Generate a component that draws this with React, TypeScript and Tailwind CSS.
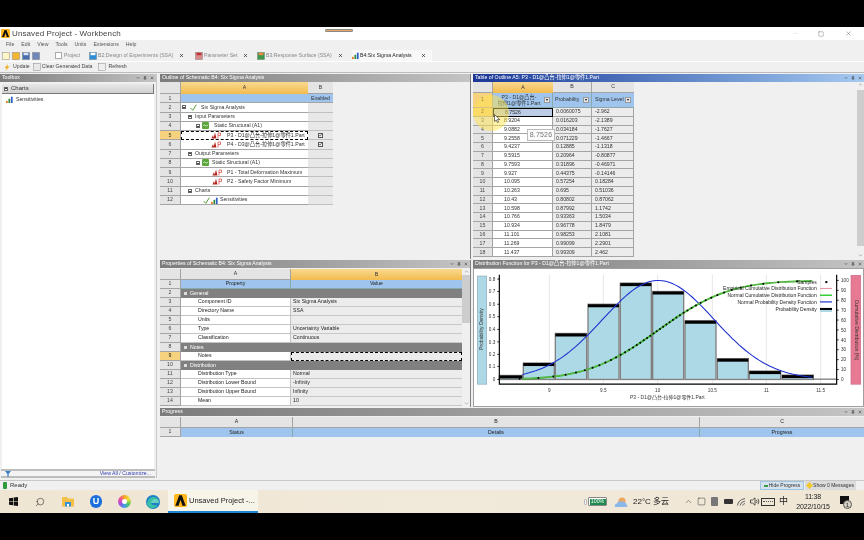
import React from "react";
import { Search, ChevronUp, ChevronDown, X, Minus, Pin, Square } from "lucide-react";

const P3 = "P3 - D1@凸台-拉伸1@零件1.Part";
const P4 = "P4 - D3@凸台-拉伸1@零件1.Part";

function Ansys({ size = 9 }: { size?: number }) {
  return (
    <svg width={size} height={size} viewBox="0 0 20 20" className="shrink-0">
      <rect width="20" height="20" rx="3" fill="#ffb71b" />
      <path d="M2 18 L8 2 H12 L18 18 H13 L10 9 L7 18 Z" fill="#111" />
    </svg>
  );
}

function Box() {
  return (
    <span className="inline-flex w-[4px] h-[4px] border-[0.5px] border-[#666] items-center justify-center shrink-0 bg-white">
      <span className="w-[2px] h-[0.5px] bg-[#444]" />
    </span>
  );
}

function Check() {
  return (
    <svg width="7" height="7" viewBox="0 0 10 10" className="shrink-0">
      <path d="M1 6 L4 9 L9 1" fill="none" stroke="#4a9a2a" strokeWidth="1.4" />
    </svg>
  );
}

function ParamIcon() {
  return (
    <svg width="10" height="7" viewBox="0 0 20 14" className="shrink-0">
      <path d="M1 13 L4 6 L6 13 Z M5 13 L8 1 L11 13 Z" fill="#b3261e" />
      <path d="M14 13 V2 H19 V7 H14" fill="none" stroke="#d9534f" strokeWidth="1.6" />
    </svg>
  );
}

function GreenIcon() {
  return (
    <svg width="7" height="7" viewBox="0 0 10 10" className="shrink-0">
      <rect width="10" height="10" rx="1.5" fill="#5aa83c" />
      <path d="M1.5 6 Q3.5 2.5 5 5 T8.5 4" fill="none" stroke="#fff" strokeWidth="1" />
    </svg>
  );
}

function ChartIcon() {
  return (
    <svg width="7" height="7" viewBox="0 0 10 10" className="shrink-0">
      <rect x="0" y="7" width="2.5" height="3" fill="#e07b20" />
      <rect x="3.5" y="4" width="2.5" height="6" fill="#2e8b3d" />
      <rect x="7" y="1" width="2.5" height="9" fill="#2f5fc4" />
    </svg>
  );
}

function PanelHeader({ title, active, wide }: { title: string; active?: boolean; wide?: boolean }) {
  return (
    <div
      className={
        active
          ? "h-[8px] shrink-0 flex items-center justify-between px-[2px] text-[5.2px] text-white bg-gradient-to-r from-[#1c3696] to-[#a6caf0]"
          : "h-[8px] shrink-0 flex items-center justify-between px-[2px] text-[5.2px] text-white bg-gradient-to-r from-[#7c7c7c] to-[#c4c4c4]"
      }
    >
      <span className="truncate">{title}</span>
      {wide !== false && (
        <span className="flex items-center gap-[3px] text-[#333] shrink-0">
          <ChevronDown size={4} strokeWidth={3} />
          <Pin size={4} strokeWidth={3} />
          <X size={4} strokeWidth={3} />
        </span>
      )}
    </div>
  );
}

const numCell = "flex items-center justify-center bg-[#e4e4e4] border-r border-b border-[#a4a4a4] text-[#444]";

function OutlineRow({ n, gold, left, dash, b, blue }: { n: number; gold?: boolean; left?: React.ReactNode; dash?: boolean; b?: React.ReactNode; blue?: boolean }) {
  return (
    <div className="grid grid-cols-[21px_127px_25px] h-[9.27px] text-[5.2px] text-[#333] leading-none">
      <div className={gold ? "flex items-center justify-center bg-[#f6d27e] border-r border-b border-[#a4a4a4]" : numCell}>{n}</div>
      <div
        className={
          blue
            ? "bg-[#9fc5ee] border-b border-[#a4a4a4]"
            : dash
            ? "bg-white border border-dashed border-black flex items-center gap-[2px]"
            : "bg-white border-b border-[#a4a4a4] flex items-center gap-[2px]"
        }
      >
        {left}
      </div>
      <div className={blue ? "bg-[#9fc5ee] border-b border-[#a4a4a4] flex items-center justify-center" : "bg-[#e8e8e8] border-b border-[#c0c0c0] flex items-center justify-center"}>{b}</div>
    </div>
  );
}

function CheckBoxMark() {
  return (
    <span className="w-[5px] h-[5px] border-[0.5px] border-[#555] bg-white flex items-center justify-center">
      <svg width="4" height="4" viewBox="0 0 10 10">
        <path d="M1 5 L4 9 L9 1" fill="none" stroke="#222" strokeWidth="2" />
      </svg>
    </span>
  );
}

function Outline() {
  return (
    <div className="flex flex-col h-full bg-[#f0f0f0] border-r border-[#808080] relative">
      <PanelHeader title="Outline of Schematic B4: Six Sigma Analysis" wide={false} />
      <div className="grid grid-cols-[21px_127px_25px] h-[12px] text-[5.2px] text-[#333] w-[173px]">
        <div className="bg-[#e4e4e4] border-r border-b border-[#a4a4a4]" />
        <div className="bg-gradient-to-b from-[#f9d98f] to-[#f2bb4c] flex items-center justify-center">A</div>
        <div className="bg-[#e4e4e4] border-b border-[#a4a4a4] flex items-center justify-center">B</div>
      </div>
      <div className="w-[173px]">
        <OutlineRow n={1} blue b="Enabled" />
        <OutlineRow n={2} left={<div className="flex items-center gap-[4px] pl-[1px]"><Box /><Check /><span>Six Sigma Analysis</span></div>} />
        <OutlineRow n={3} left={<div className="flex items-center gap-[3px] pl-[7px]"><Box /><span>Input Parameters</span></div>} />
        <OutlineRow n={4} left={<div className="flex items-center gap-[2px] pl-[15px]"><Box /><GreenIcon /><span className="ml-[3px]">Static Structural (A1)</span></div>} />
        <OutlineRow n={5} gold dash b={<CheckBoxMark />} left={<div className="flex items-center gap-[6px] pl-[29px]"><ParamIcon /><span className="whitespace-nowrap">{P3}</span></div>} />
        <OutlineRow n={6} b={<CheckBoxMark />} left={<div className="flex items-center gap-[6px] pl-[30px]"><ParamIcon /><span className="whitespace-nowrap">{P4}</span></div>} />
        <OutlineRow n={7} left={<div className="flex items-center gap-[3px] pl-[7px]"><Box /><span>Output Parameters</span></div>} />
        <OutlineRow n={8} left={<div className="flex items-center gap-[2px] pl-[15px]"><Box /><GreenIcon /><span className="ml-[1px]">Static Structural (A1)</span></div>} />
        <OutlineRow n={9} left={<div className="flex items-center gap-[5px] pl-[31px]"><ParamIcon /><span className="whitespace-nowrap">P1 - Total Deformation Maximum</span></div>} />
        <OutlineRow n={10} left={<div className="flex items-center gap-[5px] pl-[31px]"><ParamIcon /><span className="whitespace-nowrap">P2 - Safety Factor Minimum</span></div>} />
        <OutlineRow n={11} left={<div className="flex items-center gap-[3px] pl-[7px]"><Box /><span>Charts</span></div>} />
        <OutlineRow n={12} left={<div className="flex items-center gap-[1px] pl-[22px]"><Check /><ChartIcon /><span className="ml-[1px]">Sensitivities</span></div>} />
      </div>
    </div>
  );
}

const tableData: [string, string, string][] = [
  ["8.7526", "0.0060075", "-2.962"],
  ["8.9204", "0.016203", "-2.1389"],
  ["9.0882", "0.034184", "-1.7627"],
  ["9.2558", "0.071229", "-1.4667"],
  ["9.4237", "0.12885", "-1.1318"],
  ["9.5915", "0.20964", "-0.80877"],
  ["9.7593", "0.31896", "-0.46971"],
  ["9.927", "0.44375", "-0.14146"],
  ["10.095", "0.57254", "0.18284"],
  ["10.263", "0.695", "0.51036"],
  ["10.43", "0.80802", "0.87062"],
  ["10.598", "0.87992", "1.1742"],
  ["10.766", "0.93363", "1.5034"],
  ["10.934", "0.96778", "1.8479"],
  ["11.101", "0.98253", "2.1081"],
  ["11.269", "0.99099", "2.2901"],
  ["11.437", "0.99309", "2.462"],
];

function DropBtn() {
  return (
    <span className="w-[6px] h-[6px] bg-[#e8e8e8] border-[0.5px] border-[#999] flex items-center justify-center shrink-0">
      <span className="w-0 h-0 border-l-[1.5px] border-r-[1.5px] border-t-[2px] border-l-transparent border-r-transparent border-t-black" />
    </span>
  );
}

function TablePanel() {
  return (
    <div className="flex flex-col h-full bg-[#f0f0f0] relative overflow-hidden">
      <PanelHeader title={"Table of Outline A5: " + P3} active />
      <div className="flex-1 flex min-h-0">
        <div className="w-[161px] shrink-0 text-[5.2px] text-[#333] leading-none">
          <div className="grid grid-cols-[20px_60px_39px_42px] h-[11px]">
            <div className="bg-[#e4e4e4] border-r border-b border-[#a4a4a4]" />
            <div className="bg-gradient-to-b from-[#f9d98f] to-[#f2bb4c] flex items-center justify-center">A</div>
            <div className="bg-[#e4e4e4] border-r border-b border-[#a4a4a4] flex items-center justify-center">B</div>
            <div className="bg-[#e4e4e4] border-b border-[#a4a4a4] flex items-center justify-center">C</div>
          </div>
          <div className="grid grid-cols-[20px_60px_39px_42px] h-[15px]">
            <div className="bg-[#f6d27e] border-r border-b border-[#a4a4a4] flex items-center justify-center">1</div>
            <div className="bg-[#9fc5ee] border-r border-b border-[#8aa] flex items-center px-[2px] gap-[1px]">
              <span className="flex-1 text-center text-[5.2px] leading-[6px]">P3 - D1@凸台-<br />拉伸1@零件1.Part</span>
              <DropBtn />
            </div>
            <div className="bg-[#9fc5ee] border-r border-b border-[#8aa] flex items-center justify-between px-[2px]"><span>Probability</span><DropBtn /></div>
            <div className="bg-[#9fc5ee] border-b border-[#8aa] flex items-center justify-between px-[3px]"><span>Sigma Level</span><DropBtn /></div>
          </div>
          {tableData.map((r, i) => (
            <div key={i} className="grid grid-cols-[20px_60px_39px_42px] h-[8.77px]">
              <div className={i === 0 ? "bg-[#f6d27e] border-r border-b border-[#a4a4a4] flex items-center justify-center" : numCell}>{i + 2}</div>
              <div className={i === 0 ? "bg-[#bccbe6] border border-black flex items-center pl-[11px]" : "bg-white border-b border-r border-[#a4a4a4] flex items-center pl-[11px]"}>{r[0]}</div>
              <div className="bg-[#ececec] border-b border-r border-[#a4a4a4] flex items-center pl-[3px]">{r[1]}</div>
              <div className="bg-[#ececec] border-b border-r border-[#a4a4a4] flex items-center pl-[3px]">{r[2]}</div>
            </div>
          ))}
        </div>
        <div className="flex-1" />
        <div className="w-[7px] shrink-0 flex flex-col items-center text-[#555]">
          <ChevronUp size={5} strokeWidth={2} />
          <div className="w-full flex-1 bg-[#cdcdcd] mb-[7px] mt-[3px]" />
          <ChevronDown size={5} strokeWidth={2} className="mb-[1px]" />
        </div>
      </div>
      <div className="absolute left-[54px] top-[55px] h-[12px] w-[28px] bg-[#fafafa] border border-[#bbb] text-[7px] tracking-wide text-[#777] flex items-center justify-center">8.7526</div>
      <div className="absolute left-0 top-[21px] w-[36px] h-[36px] rounded-full bg-[#ffe44d]/50" />
      <svg className="absolute left-[21px] top-[40px]" width="7" height="9" viewBox="0 0 7 9">
        <path d="M0.5 0.5 V7.5 L2.2 6 L3.4 8.5 L4.6 8 L3.4 5.5 H5.8 Z" fill="#fff" stroke="#222" strokeWidth="0.6" />
      </svg>
    </div>
  );
}

function PropRow({ n, a, b, gold, dash }: { n: number; a: string; b?: string; gold?: boolean; dash?: boolean }) {
  return (
    <div className="grid grid-cols-[21px_110px_171px] h-[9px] text-[5.2px] text-[#222] leading-none">
      <div className={gold ? "flex items-center justify-center bg-[#f6d27e] border-r border-b border-[#a4a4a4]" : numCell}>{n}</div>
      <div className="bg-white border-r border-b border-[#c4c4c4] flex items-center pl-[17px]">{a}</div>
      <div className={dash ? "bg-[#ececec] border border-dashed border-black" : "bg-[#ececec] border-b border-[#c8c8c8] flex items-center pl-[2px]"}>{b}</div>
    </div>
  );
}

function PropSection({ n, t }: { n: number; t: string }) {
  return (
    <div className="grid grid-cols-[21px_281px] h-[9px] text-[5.2px] leading-none">
      <div className={numCell}>{n}</div>
      <div className="bg-[#808080] text-white flex items-center pl-[3px] gap-[3px]">
        <span className="w-[3px] h-[3px] bg-[#ddd]" />
        {t}
      </div>
    </div>
  );
}

function Properties() {
  return (
    <div className="flex flex-col h-full bg-[#f0f0f0] border-r border-[#808080] overflow-hidden">
      <PanelHeader title="Properties of Schematic B4: Six Sigma Analysis" />
      <div className="flex flex-1 min-h-0 pt-[1px]">
        <div className="w-[302px] shrink-0">
          <div className="grid grid-cols-[21px_110px_171px] h-[11px] text-[5.2px] text-[#333]">
            <div className="bg-[#e4e4e4] border-r border-b border-[#a4a4a4]" />
            <div className="bg-[#e4e4e4] border-r border-b border-[#a4a4a4] flex items-center justify-center">A</div>
            <div className="bg-gradient-to-b from-[#f9d98f] to-[#f2bb4c] flex items-center justify-center">B</div>
          </div>
          <div className="grid grid-cols-[21px_110px_171px] h-[9px] text-[5.2px] text-[#222] leading-none">
            <div className={numCell}>1</div>
            <div className="bg-[#9fc5ee] border-r border-b border-[#8aa] flex items-center justify-center">Property</div>
            <div className="bg-[#9fc5ee] border-b border-[#8aa] flex items-center justify-center">Value</div>
          </div>
          <PropSection n={2} t="General" />
          <PropRow n={3} a="Component ID" b="Six Sigma Analysis" />
          <PropRow n={4} a="Directory Name" b="SSA" />
          <PropRow n={5} a="Units" />
          <PropRow n={6} a="Type" b="Uncertainty Variable" />
          <PropRow n={7} a="Classification" b="Continuous" />
          <PropSection n={8} t="Notes" />
          <PropRow n={9} a="Notes" gold dash />
          <PropSection n={10} t="Distribution" />
          <PropRow n={11} a="Distribution Type" b="Normal" />
          <PropRow n={12} a="Distribution Lower Bound" b="-Infinity" />
          <PropRow n={13} a="Distribution Upper Bound" b="Infinity" />
          <PropRow n={14} a="Mean" b="10" />
        </div>
        <div className="flex-1 flex flex-col items-center text-[#555]">
          <ChevronUp size={5} strokeWidth={2} />
          <div className="w-full h-[48px] bg-[#cdcdcd] mt-[1px]" />
          <div className="flex-1" />
          <ChevronDown size={5} strokeWidth={2} className="mb-[1px]" />
        </div>
      </div>
    </div>
  );
}

const bars: [number, number, number][] = [
  [88, 157, 350],
  [160, 253, 313],
  [256, 350, 225],
  [354, 447, 138],
  [451, 544, 75],
  [548, 641, 100],
  [645, 738, 187],
  [742, 835, 300],
  [838, 932, 337],
  [936, 1030, 349],
];

function erf(x: number) {
  const s = x < 0 ? -1 : 1;
  const a = Math.abs(x);
  const t = 1 / (1 + 0.3275911 * a);
  const y = 1 - ((((1.061405429 * t - 1.453152027) * t + 1.421413741) * t - 0.284496736) * t + 0.254829592) * t * Math.exp(-a * a);
  return s * y;
}
const pdfY = (x: number) => 362 - 295 * Math.exp(-((x - 565) ** 2) / (2 * 167 * 167));
const cdfY = (x: number) => 362 - 294 * (0.5 * (1 + erf((x - 565) / (167 * Math.SQRT2))));
const xs = Array.from({ length: 88 }, (_, i) => 157 + i * 10);
const dots = Array.from({ length: 44 }, (_, i) => 565 + 175 * Math.tan(((i - 21.5) / 22) * 1.2));
const pts = (f: (x: number) => number) => xs.map((x) => x + "," + f(x).toFixed(1)).join(" ");

function Chart() {
  const grid = [238, 400, 563, 727, 889, 1052];
  const xl = ["9", "9.5", "10", "10.5", "11", "11.5"];
  const lt: [string, number][] = [["0", 362], ["0.1", 323], ["0.2", 287], ["0.3", 250], ["0.4", 213], ["0.5", 175], ["0.6", 138], ["0.7", 100], ["0.8", 63]];
  const rt = [0, 10, 20, 30, 40, 50, 60, 70, 80, 90, 100];
  const font = "'Liberation Sans','Noto Sans CJK SC',sans-serif";
  return (
    <div className="flex flex-col h-full overflow-hidden bg-[#f0f0f0]">
      <PanelHeader title={"Distribution Function for " + P3} />
      <div className="flex-1 min-h-0 bg-white border border-[#a0a0a0]">
        <svg viewBox="12 33 1167 408" className="w-full h-full block" preserveAspectRatio="none" fontFamily={font}>
          <rect x="22" y="54" width="28" height="322" fill="#add8e6" stroke="#8ab" strokeWidth="2" />
          <text transform="translate(38 212) rotate(-90)" fontSize="15" textAnchor="middle" fill="#333">Probability Density</text>
          <rect x="1143" y="52" width="29" height="324" fill="#e67a92" stroke="#c68" strokeWidth="2" />
          <text transform="translate(1155 215) rotate(90)" fontSize="15" textAnchor="middle" fill="#333">Cumulative Distribution (%)</text>
          {grid.map((g) => (
            <line key={g} x1={g} x2={g} y1="50" y2="375" stroke="#e2e2e2" strokeWidth="2.5" />
          ))}
          {bars.map(([a, b, t]) => (
            <g key={a}>
              <rect x={a} y={t} width={b - a} height={362 - t} fill="#add8e6" stroke="#808080" strokeWidth="4" />
              <rect x={a} y={t} width={b - a} height="9" fill="#000" />
            </g>
          ))}
          <line x1="1030" x2="1100" y1="361" y2="361" stroke="#555" strokeWidth="3" />
          <polyline points={pts(pdfY)} fill="none" stroke="#1c2fd0" strokeWidth="3.2" />
          <polyline points={pts(cdfY)} fill="none" stroke="#00c000" strokeWidth="5" />
          <polyline points={pts(cdfY)} fill="none" stroke="#e89aa8" strokeWidth="1.6" />
          {dots.map((x) => (
            <circle key={x} cx={x} cy={cdfY(x)} r="3" fill="#000" />
          ))}
          <path d="M88 50 V376 H1100 V50" fill="none" stroke="#000" strokeWidth="3.5" />
          {lt.map(([l, y]) => (
            <g key={l}>
              <line x1="82" x2="88" y1={y} y2={y} stroke="#000" strokeWidth="2.5" />
              <text x="76" y={y + 5} fontSize="14" textAnchor="end" fill="#333">{l}</text>
            </g>
          ))}
          {rt.map((v, i) => (
            <g key={v}>
              <line x1="1100" x2="1106" y1={362 - i * 29.5} y2={362 - i * 29.5} stroke="#000" strokeWidth="2.5" />
              <text x="1113" y={362 - i * 29.5 + 5} fontSize="14" fill="#333">{v}</text>
            </g>
          ))}
          {grid.map((g, i) => (
            <text key={g} x={g} y="398" fontSize="14" textAnchor="middle" fill="#333">{xl[i]}</text>
          ))}
          <text x="592" y="421" fontSize="15" textAnchor="middle" fill="#333">{P3}</text>
          <g fontSize="15" textAnchor="end" fill="#222">
            <text x="1040" y="77">Samples</text>
            <text x="1040" y="96">Empirical Cumulative Distribution Function</text>
            <text x="1040" y="116">Normal Cumulative Distribution Function</text>
            <text x="1040" y="136">Normal Probability Density Function</text>
            <text x="1040" y="157">Probability Density</text>
          </g>
          <rect x="1066" y="69" width="6" height="6" fill="#000" />
          <line x1="1050" x2="1086" y1="91" y2="91" stroke="#e89aa8" strokeWidth="3.5" />
          <line x1="1050" x2="1086" y1="111" y2="111" stroke="#00c000" strokeWidth="3.5" />
          <line x1="1050" x2="1086" y1="131" y2="131" stroke="#1c2fd0" strokeWidth="3.5" />
          <rect x="1050" y="150" width="36" height="11" fill="#add8e6" />
          <rect x="1050" y="149" width="36" height="6" fill="#000" />
        </svg>
      </div>
    </div>
  );
}

function Progress() {
  return (
    <div className="h-[70px] flex flex-col bg-[#f0f0f0]">
      <PanelHeader title="Progress" />
      <div className="pt-[1px] text-[5.2px] text-[#222]">
        <div className="grid grid-cols-[21px_112px_407px_1fr] h-[11px]">
          <div className="bg-[#e4e4e4] border-r border-b border-[#a4a4a4]" />
          <div className="bg-[#e4e4e4] border-r border-b border-[#a4a4a4] flex items-center justify-center">A</div>
          <div className="bg-[#e4e4e4] border-r border-b border-[#a4a4a4] flex items-center justify-center">B</div>
          <div className="bg-[#e4e4e4] border-b border-[#a4a4a4] flex items-center justify-center">C</div>
        </div>
        <div className="grid grid-cols-[21px_112px_407px_1fr] h-[9px]">
          <div className={numCell}>1</div>
          <div className="bg-[#9fc5ee] border-r border-[#8aa] flex items-center justify-center">Status</div>
          <div className="bg-[#9fc5ee] border-r border-[#8aa] flex items-center justify-center">Details</div>
          <div className="bg-[#9fc5ee] flex items-center justify-center">Progress</div>
        </div>
      </div>
    </div>
  );
}

function Toolbox() {
  return (
    <div className="w-[157px] shrink-0 h-[404px] flex flex-col bg-[#f0f0f0] border-r border-[#c8c8c8]">
      <PanelHeader title="Toolbox" />
      <div className="mt-[2px] mx-[2px] h-[10px] bg-gradient-to-b from-[#e8e8e8] to-[#d0d0d0] border-r border-b border-[#777] flex items-center gap-[3px] pl-[2px] text-[6px] text-[#333]">
        <Box />
        Charts
      </div>
      <div className="flex-1 bg-white mx-[2px] px-[4px] pt-[1px]">
        <div className="flex items-center gap-[3px] text-[5.2px] text-[#333] h-[9px]">
          <ChartIcon />
          Sensitivities
        </div>
      </div>
      <div className="h-[9px] mx-[1px] bg-[#f4f4f4] border-t-2 border-b-2 border-[#bdbdbd] flex items-center justify-between pl-[4px] pr-[4px]">
        <svg width="6" height="6" viewBox="0 0 10 10">
          <path d="M0 0 H10 L6 5 V10 H4 V5 Z" fill="#3a7fc4" />
        </svg>
        <span className="text-[5.2px] text-[#2b3cae]">View All / Customize...</span>
      </div>
    </div>
  );
}

function Sq({ c, c2 }: { c: string; c2?: string }) {
  return (
    <svg width="8" height="8" viewBox="0 0 10 10" className="shrink-0">
      <rect x="0.5" y="0.5" width="9" height="9" fill={c} stroke="#888" strokeWidth="0.6" />
      {c2 && <rect x="2" y="1" width="6" height="3" fill={c2} />}
    </svg>
  );
}

function TabX() {
  return <X size={5} strokeWidth={3.5} className="text-[#333] shrink-0" />;
}

function Tabs() {
  return (
    <div className="h-[12px] shrink-0 bg-[#f0f0f0] border-b border-white flex items-center pl-[1px] text-[5.2px] text-[#888]">
      <div className="flex items-center gap-[2px] w-[54px] pl-[1px]">
        <Sq c="#fff6c8" />
        <Sq c="#f2b632" />
        <Sq c="#4a6fb0" c2="#dde6f4" />
        <Sq c="#7088b8" />
      </div>
      <div className="flex items-center gap-[2px] w-[34px]">
        <span className="w-[7px] h-[7px] border border-[#aaa] bg-white shrink-0" />
        <span>Project</span>
      </div>
      <div className="flex items-center gap-[1px] w-[106px] whitespace-nowrap">
        <Sq c="#2f8fd8" c2="#fff" />
        <span>B2:Design of Experiments (SSA)</span>
        <span className="ml-[5px]"><TabX /></span>
      </div>
      <div className="flex items-center gap-[1px] w-[62px] whitespace-nowrap">
        <Sq c="#d98a8a" c2="#b33" />
        <span>Parameter Set</span>
        <span className="ml-[5px]"><TabX /></span>
      </div>
      <div className="flex items-center gap-[1px] w-[95px] whitespace-nowrap">
        <Sq c="#3a9a4a" c2="#e84" />
        <span>B3:Response Surface (SSA)</span>
        <span className="ml-[5px]"><TabX /></span>
      </div>
      <div className="flex items-center gap-[1px] w-[80px] shrink-0 whitespace-nowrap text-[#222] bg-[#f8f8f8] h-full pr-[6px]">
        <ChartIcon />
        <span>B4:Six Sigma Analysis</span>
        <span className="ml-auto"><TabX /></span>
      </div>
      <div className="flex-1 h-full" />
    </div>
  );
}

function Taskbar() {
  return (
    <div className="h-[23px] shrink-0 flex items-center bg-gradient-to-r from-[#efe5d3] via-[#f1e9da] to-[#efe6d5] relative text-[#222]">
      <div className="w-[26px] flex justify-center">
        <svg width="9" height="9" viewBox="0 0 10 10">
          <path d="M0 1.4 L4.5 .7 V4.7 H0 Z M5.2 .6 L10 0 V4.7 H5.2 Z M0 5.3 H4.5 V9.3 L0 8.6 Z M5.2 5.3 H10 V10 L5.2 9.4 Z" fill="#111" />
        </svg>
      </div>
      <div className="w-[28px] flex justify-center"><Search size={10} strokeWidth={1.3} className="-scale-x-100" /></div>
      <div className="w-[28px] flex justify-center">
        <svg width="12" height="11" viewBox="0 0 12 11">
          <path d="M0 1 H5 L6 2.5 H12 V10.5 H0 Z" fill="#f5c044" />
          <rect x="3" y="6" width="6" height="4.5" fill="#3d8fd8" />
          <rect x="5" y="8" width="2" height="2.5" fill="#fff" />
        </svg>
      </div>
      <div className="w-[28px] flex justify-center">
        <span className="w-[12px] h-[13px] rounded-full bg-[#1a6fdc] flex items-center justify-center text-white text-[9px] font-bold leading-none">U</span>
      </div>
      <div className="w-[28px] flex justify-center">
        <span className="w-[13px] h-[13px] rounded-full bg-[conic-gradient(#f5a623,#f0e040,#5ac85a,#3aa0e8,#a050e0,#f050a0,#f5a623)] flex items-center justify-center">
          <span className="w-[5px] h-[5px] rounded-full bg-white" />
        </span>
      </div>
      <div className="w-[29px] flex justify-center">
        <svg width="14" height="14" viewBox="0 0 14 14">
          <circle cx="7" cy="7" r="7" fill="#1a7fc8" />
          <path d="M1 8 Q3 1 8 2 Q13 3 13 8 H5 Q6 11 12 10 Q9 14 5 13 Q1 12 1 8" fill="#38c0a8" />
          <path d="M5 8 H13 Q13 4 9 4 Q6 4 5 8" fill="#fff" opacity="0.25" />
        </svg>
      </div>
      <div className="w-[90px] h-full ml-[1px] bg-[#f7f4ea] border-b-2 border-[#1c86d4] flex items-center pl-[6px] gap-[2px]">
        <Ansys size={13} />
        <span className="text-[7.5px] whitespace-nowrap">Unsaved Project -...</span>
      </div>
      <div className="flex-1" />
      <div className="flex items-center h-full pr-[7px]">
        <div className="flex items-center mr-[7px]">
          <span className="w-[3px] h-[6px] bg-white border-[0.5px] border-[#bbb] rounded-[1px]" />
          <span className="ml-[1px] w-[19px] h-[9px] border border-[#888] bg-white flex items-center p-[0.5px] rounded-[1px]">
            <span className="w-full h-full bg-[#1f8a4c] text-white text-[5.2px] leading-none flex items-center justify-center">100%</span>
          </span>
        </div>
        <svg width="14" height="10" viewBox="0 0 14 10" className="mr-[5px]">
          <circle cx="8" cy="4" r="3.6" fill="#f0a860" />
          <path d="M1 10 Q0 7 3 6.4 Q4 3.4 7.5 4.6 Q12 4 13.5 10 Z" fill="#8ab8e8" />
        </svg>
        <span className="text-[8px] whitespace-nowrap w-[51px]">22°C 多云</span>
        <ChevronUp size={9} strokeWidth={1.2} className="mr-[4px]" />
        <Square size={9} strokeWidth={1.2} className="mr-[5px]" />
        <span className="w-[7px] h-[9px] rounded-[1px] bg-[#777] mr-[6px]" />
        <span className="w-[9px] h-[5px] bg-[#333] rounded-[1px] mr-[4px]" />
        <svg width="9" height="8" viewBox="0 0 9 8" className="mr-[4px]">
          <path d="M0.5 7.5 Q1 2 8 0.5 M3 7.5 Q3.5 4 8 3 M5.5 7.5 Q6 6 8 5.5" fill="none" stroke="#555" strokeWidth="0.9" />
        </svg>
        <svg width="10" height="9" viewBox="0 0 10 9" className="mr-[1px]">
          <path d="M0.5 3 H2.5 L5 0.8 V8.2 L2.5 6 H0.5 Z" fill="none" stroke="#333" strokeWidth="0.8" />
          <path d="M6.5 3 Q7.5 4.5 6.5 6 M8 1.8 Q9.8 4.5 8 7.2" fill="none" stroke="#333" strokeWidth="0.8" />
        </svg>
        <span className="w-[14px] h-[8px] border border-[#333] mr-[4px] flex items-center justify-center">
          <span className="w-[10px] border-t border-dotted border-[#555]" />
        </span>
        <span className="text-[9px] w-[12px]">中</span>
        <div className="w-[42px] flex flex-col items-center text-[7px] leading-[10px] whitespace-nowrap tracking-tight ml-[1px]">
          <span>11:38</span>
          <span>2022/10/15</span>
        </div>
        <span className="relative w-[9px] h-[8px] bg-[#111] ml-[6px] mb-[4px]">
          <span className="absolute left-[3px] top-[4px] w-[9px] h-[9px] rounded-full bg-[#d8d2c6] border border-[#555] text-[6px] leading-[8px] text-center">1</span>
        </span>
        <span className="w-[8px]" />
      </div>
    </div>
  );
}

export default function App() {
  return (
    <div className="w-[864px] h-[540px] bg-black overflow-hidden pt-[27px] font-['Liberation_Sans','Noto_Sans_CJK_SC',sans-serif] blur-[0.4px]">
      <div className="h-[486px] flex flex-col bg-[#f0f0f0] relative">
        <div className="h-[13px] shrink-0 bg-white flex items-center pl-[1px] gap-[2px]">
          <Ansys size={9} />
          <span className="text-[8px] text-[#444] tracking-[0.1px]">Unsaved Project - Workbench</span>
          <div className="flex-1" />
          <Minus size={7} strokeWidth={1} className="text-[#bbb] mr-[17px]" />
          <Square size={6} strokeWidth={1.2} className="text-[#333] mr-[19px]" />
          <X size={7} strokeWidth={1.2} className="text-[#333] mr-[12px]" />
        </div>
        <div className="absolute left-[325px] top-[2px] w-[28px] h-[3px] rounded-[1px] bg-[#e8a860] border-[0.5px] border-[#888]" />
        <div className="h-[10px] shrink-0 flex items-center gap-[7px] pl-[6px] text-[5.2px] text-[#555] bg-[#f0f0f0]">
          <span>File</span><span>Edit</span><span>View</span><span>Tools</span><span>Units</span><span>Extensions</span><span>Help</span>
        </div>
        <Tabs />
        <div className="h-[11px] shrink-0 border-b border-[#bbb] flex items-center pl-[4px] gap-[3px] text-[5.2px] text-[#444] bg-[#f0f0f0]">
          <svg width="6" height="7" viewBox="0 0 6 7"><path d="M4 0 L0.5 4 H2.5 L1.5 7 L5.5 2.6 H3.4 Z" fill="#f0b020" /></svg>
          <span>Update</span>
          <Sq c="#e8e8e8" />
          <span className="mr-[2px] -ml-[2px]">Clear Generated Data</span>
          <Sq c="#eee" />
          <span>Refresh</span>
        </div>
        <div className="flex-1 min-h-0 flex mt-[1px] gap-[3px]">
          <Toolbox />
          <div className="flex-1 min-w-0 flex flex-col">
            <div className="grid grid-cols-[311px_1fr] grid-rows-[185px_147px] gap-x-[2px] gap-y-[1px] shrink-0">
              <Outline />
              <TablePanel />
              <Properties />
              <Chart />
            </div>
            <div className="mt-[1px]"><Progress /></div>
          </div>
        </div>
        <div className="h-[10px] shrink-0 border-t border-[#c8c8c8] flex items-center pl-[3px] gap-[3px] text-[6px] text-[#333] bg-[#f0f0f0]">
          <span className="w-[4px] h-[7px] rounded-[1px] bg-[#2e9a3e]" />
          <span>Ready</span>
          <div className="flex-1" />
          <span className="h-[9px] w-[44px] bg-[#d6e2ec] border border-[#9ec4e4] flex items-center justify-center text-[5px] gap-[1px] whitespace-nowrap">
            <span className="w-[4px] h-[2px] bg-[#3a9a4a]" />Hide Progress
          </span>
          <span className="h-[9px] w-[51px] bg-[#dcdcdc] flex items-center justify-center text-[5px] gap-[1px] whitespace-nowrap mr-[8px] -ml-[2px]">
            <span className="w-[5px] h-[5px] bg-[#f0c830] rotate-45" />Show 0 Messages
          </span>
        </div>
        <Taskbar />
      </div>
    </div>
  );
}
